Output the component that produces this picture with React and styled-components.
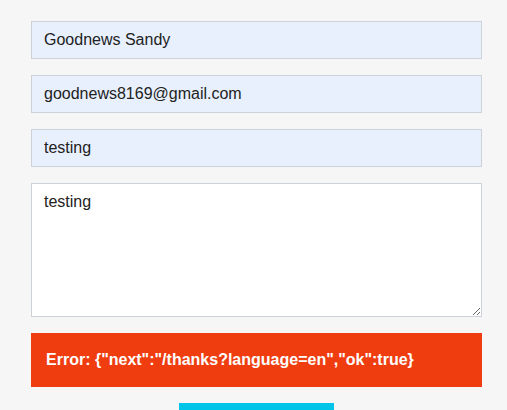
import React from 'react'
import styled, { createGlobalStyle } from 'styled-components'

const GlobalStyle = createGlobalStyle`
  html, body {
    margin: 0;
    padding: 0;
    background: #f6f6f6;
    font-family: "Liberation Sans", Arial, sans-serif;
  }
`

const Form = styled.form`
  display: flex;
  flex-direction: column;
  gap: 16px;
  width: 451px;
  padding: 21px 0 0 31px;
`

const Input = styled.input`
  box-sizing: border-box;
  height: 38px;
  width: 100%;
  margin: 0;
  padding: 0 12px;
  border: 1px solid #cdd2d8;
  border-radius: 0;
  background: #e8f0fe;
  color: #222;
  font-family: inherit;
  font-size: 16px;
  outline: none;
`

const TextArea = styled.textarea`
  box-sizing: border-box;
  display: block;
  height: 134px;
  width: 100%;
  margin: 0;
  padding: 9px 12px;
  border: 1px solid #cdd2d8;
  border-radius: 0;
  background: #fff;
  color: #222;
  font-family: inherit;
  font-size: 16px;
  outline: none;
`

const ErrorBox = styled.div`
  box-sizing: border-box;
  height: 54px;
  display: flex;
  align-items: center;
  padding: 0 15px;
  background: #ef3d10;
  color: #fff;
  font-weight: 700;
  font-size: 16px;
`

const Submit = styled.button`
  align-self: center;
  width: 155px;
  height: 40px;
  border: none;
  background: #00c4e8;
  color: #fff;
  font-family: inherit;
  font-size: 16px;
`

export default function App() {
  return (
    <>
      <GlobalStyle />
      <Form onSubmit={(e) => e.preventDefault()}>
        <Input readOnly defaultValue="Goodnews Sandy" />
        <Input readOnly defaultValue="goodnews8169@gmail.com" />
        <Input readOnly defaultValue="testing" />
        <TextArea readOnly defaultValue="testing" />
        <ErrorBox>Error: {'{"next":"/thanks?language=en","ok":true}'}</ErrorBox>
        <Submit type="submit" />
      </Form>
    </>
  )
}
